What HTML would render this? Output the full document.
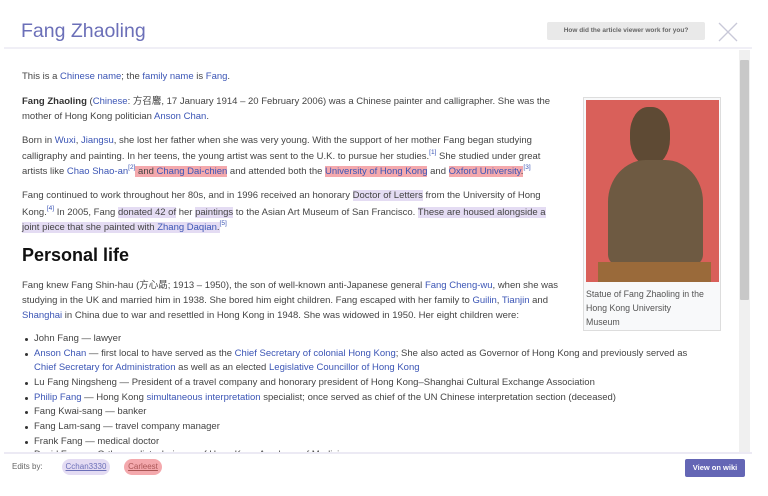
<!DOCTYPE html>
<html><head><meta charset="utf-8"><style>
*{margin:0;padding:0;box-sizing:border-box}
body{width:768px;height:496px;background:#fff;font-family:"Liberation Sans","Noto Sans CJK SC",sans-serif;color:#444;position:relative;overflow:hidden}
.c{position:absolute;left:0;top:2px;width:739px;height:450px;overflow:hidden}
.t{position:absolute;left:22px;font-size:9.5px;white-space:nowrap;line-height:12px;height:12px}
a{color:#3b55b5;text-decoration:none}
.r{background:#f4a9ad}
.p{background:#e4dcf3}
sup{font-size:6.5px;vertical-align:top;line-height:0;position:relative;top:2px;color:#3b55b5}
.b{font-weight:bold;color:#333}
.li{left:34px}
.li:before{content:"";position:absolute;left:-9px;top:5px;width:3px;height:3px;border-radius:50%;background:#333}
</style></head><body>
<div style="position:absolute;left:21px;top:20px;font-size:19.5px;color:#6b6fb8">Fang Zhaoling</div>
<div style="position:absolute;left:547px;top:22px;width:158px;height:18px;background:#e9e9e9;border-radius:2px;font-size:6.5px;font-weight:bold;color:#666;text-align:center;line-height:18px">How did the article viewer work for you?</div>
<svg style="position:absolute;left:717px;top:21px" width="22" height="22"><path d="M2 2L20 20M20 2L2 20" stroke="#c8c8d8" stroke-width="1.3"/></svg>
<div style="position:absolute;left:4px;top:47px;width:748px;height:2px;background:#f0eff6"></div>
<div style="position:absolute;left:739px;top:50px;width:11px;height:403px;background:#f0f0f0"></div>
<div style="position:absolute;left:740px;top:60px;width:9px;height:240px;background:#c8c8c8;border-radius:1px"></div>

<div class="c">
<div class="t" style="top:69px">This is a <a>Chinese name</a>; the <a>family name</a> is <a>Fang</a>.</div>
<div class="t" style="top:94px"><span class="b">Fang Zhaoling</span> (<a>Chinese</a>: 方召麐, 17 January 1914 – 20 February 2006) was a Chinese painter and calligrapher. She was the</div>
<div class="t" style="top:109px">mother of Hong Kong politician <a>Anson Chan</a>.</div>
<div class="t" style="top:133px">Born in <a>Wuxi</a>, <a>Jiangsu</a>, she lost her father when she was very young. With the support of her mother Fang began studying</div>
<div class="t" style="top:149px">calligraphy and painting. In her teens, the young artist was sent to the U.K. to pursue her studies.<sup>[1]</sup> She studied under great</div>
<div class="t" style="top:164px">artists like <a>Chao Shao-an</a><sup>[2]</sup><span class="r"> and <a>Chang Dai-chien</a></span> and attended both the <span class="r"><a>University of Hong Kong</a></span> and <span class="r"><a>Oxford University</a>.</span><sup>[3]</sup></div>
<div class="t" style="top:188px">Fang continued to work throughout her 80s, and in 1996 received an honorary <span class="p">Doctor of Letters</span> from the University of Hong</div>
<div class="t" style="top:205px">Kong.<sup>[4]</sup> In 2005, Fang <span class="p">donated 42 of</span> her <span class="p">paintings</span> to the Asian Art Museum of San Francisco. <span class="p">These are housed alongside a</span></div>
<div class="t" style="top:220px"><span class="p">joint piece that she painted with <a>Zhang Daqian</a>.</span><sup>[5]</sup></div>
<div style="position:absolute;left:22px;top:243px;font-size:18px;font-weight:bold;color:#111">Personal life</div>
<div class="t" style="top:278px">Fang knew Fang Shin-hau (方心勗; 1913 – 1950), the son of well-known anti-Japanese general <a>Fang Cheng-wu</a>, when she was</div>
<div class="t" style="top:293px">studying in the UK and married him in 1938. She bored him eight children. Fang escaped with her family to <a>Guilin</a>, <a>Tianjin</a> and</div>
<div class="t" style="top:308px"><a>Shanghai</a> in China due to war and resettled in Hong Kong in 1948. She was widowed in 1950. Her eight children were:</div>
<div class="t li" style="top:331px">John Fang — lawyer</div>
<div class="t li" style="top:346px"><a>Anson Chan</a> — first local to have served as the <a>Chief Secretary of colonial Hong Kong</a>; She also acted as Governor of Hong Kong and previously served as</div>
<div class="t" style="top:360px;left:34px"><a>Chief Secretary for Administration</a> as well as an elected <a>Legislative Councillor of Hong Kong</a></div>
<div class="t li" style="top:375px">Lu Fang Ningsheng — President of a travel company and honorary president of Hong Kong–Shanghai Cultural Exchange Association</div>
<div class="t li" style="top:390px"><a>Philip Fang</a> — Hong Kong <a>simultaneous interpretation</a> specialist; once served as chief of the UN Chinese interpretation section (deceased)</div>
<div class="t li" style="top:404px">Fang Kwai-sang — banker</div>
<div class="t li" style="top:419px">Fang Lam-sang — travel company manager</div>
<div class="t li" style="top:434px">Frank Fang — medical doctor</div>
<div class="t li" style="top:447px">David Fang — Orthopaedist; chairman of Hong Kong Academy of Medicine</div>
</div>
<div style="position:absolute;left:4px;top:452px;width:748px;height:2px;background:#eceaf4"></div>

<div style="position:absolute;left:583px;top:97px;width:138px;height:234px;border:1px solid #ddd;background:#f8f9fa">
<div style="position:absolute;left:2px;top:2px;width:133px;height:182px;background:#d9605a;overflow:hidden">
<div style="position:absolute;left:44px;top:7px;width:40px;height:58px;border-radius:45%;background:#5e4a34"></div>
<div style="position:absolute;left:22px;top:60px;width:95px;height:105px;border-radius:40% 40% 10% 10%;background:#6e5a42"></div>
<div style="position:absolute;left:12px;top:162px;width:113px;height:20px;background:#9a6a3a"></div>
</div>
<div style="position:absolute;left:2px;top:189px;font-size:8.8px;line-height:14px;color:#555">Statue of Fang Zhaoling in the<br>Hong Kong University<br>Museum</div>
</div>

<div style="position:absolute;left:12px;top:462px;font-size:8px;color:#666">Edits by:</div>
<div style="position:absolute;left:62px;top:459px;width:48px;height:16px;border-radius:8px;background:#e4dcf3;font-size:8px;line-height:16px;text-align:center;color:#6b6fb8;text-decoration:underline">Cchan3330</div>
<div style="position:absolute;left:124px;top:459px;width:38px;height:16px;border-radius:8px;background:#f4a9ad;font-size:8px;line-height:16px;text-align:center;color:#a55;text-decoration:underline">Carleest</div>
<div style="position:absolute;left:685px;top:459px;width:60px;height:18px;border-radius:2px;background:#6466b5;font-size:7.5px;font-weight:bold;line-height:18px;text-align:center;color:#fff">View on wiki</div>
</body></html>
